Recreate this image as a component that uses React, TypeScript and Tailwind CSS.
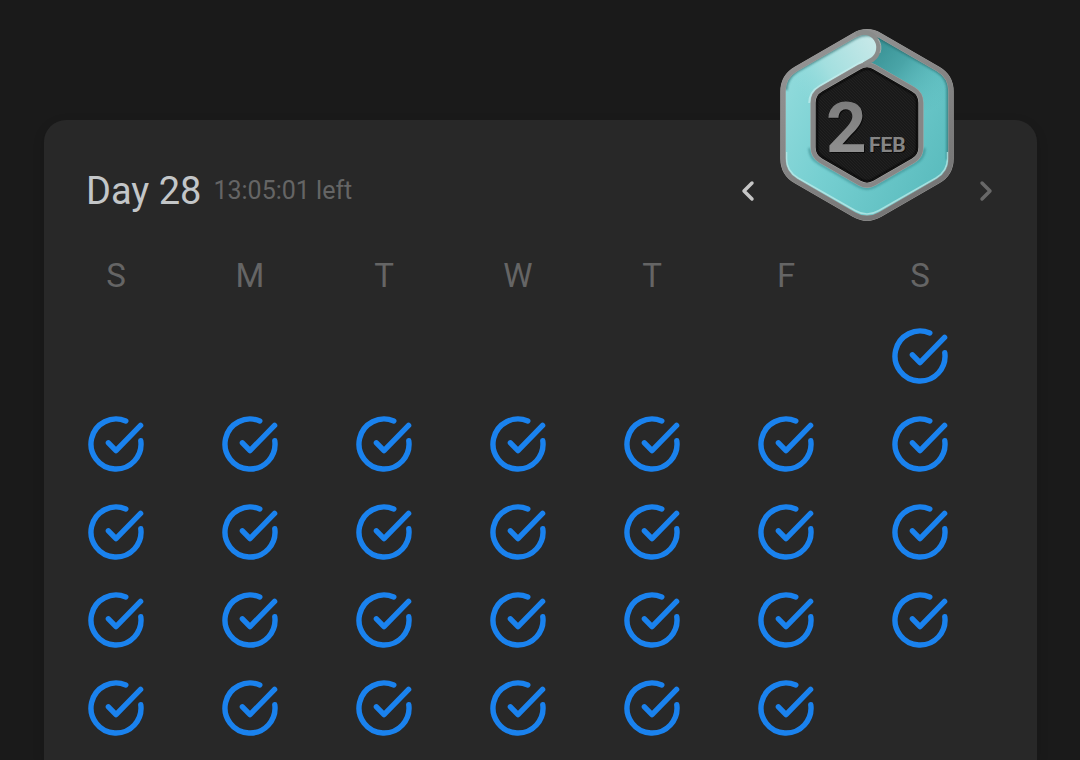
import { ChevronLeft, ChevronRight } from "lucide-react";

const WEEKDAYS = [
  { short: "S", name: "Sunday" },
  { short: "M", name: "Monday" },
  { short: "T", name: "Tuesday" },
  { short: "W", name: "Wednesday" },
  { short: "T", name: "Thursday" },
  { short: "F", name: "Friday" },
  { short: "S", name: "Saturday" },
];

const FIRST_WEEKDAY = 6;
const COMPLETED_DAYS = 28;

const weeks: boolean[][] = Array.from({ length: 5 }, (_, week) =>
  Array.from({ length: 7 }, (_, weekday) => {
    const day = week * 7 + weekday - FIRST_WEEKDAY + 1;
    return day >= 1 && day <= COMPLETED_DAYS;
  }),
);

function CheckIcon() {
  return (
    <svg
      viewBox="0 0 56 56"
      className="mx-auto block h-14 w-14"
      fill="none"
      stroke="#1a82ee"
      strokeWidth="5.4"
      strokeLinecap="round"
      strokeLinejoin="round"
      role="img"
      aria-label="Completed"
    >
      <path d="M37.8 5 A25 25 0 1 0 52.8 24.8" />
      <path d="M20.4 26.8 L28 34.6 L52.6 9.4" />
    </svg>
  );
}

const OUTER =
  "M84 15.5 Q97 8 110 15.5 L168 49 Q181 56.5 181 71.5 V138.5 Q181 153.5 168 161 L110 194.5 Q97 202 84 194.5 L26 161 Q13 153.5 13 138.5 V71.5 Q13 56.5 26 49 Z";
const INNER =
  "M89.3 46.9 Q97 42.5 104.7 46.9 L143.3 69.2 Q151 73.7 151 82.7 V127.3 Q151 136.3 143.3 140.8 L104.7 163.1 Q97 167.5 89.3 163.1 L50.7 140.8 Q43 136.3 43 127.3 V82.7 Q43 73.7 50.7 69.2 Z";

function MonthBadge() {
  return (
    <svg
      viewBox="0 0 200 210"
      className="pointer-events-none absolute left-1/2 top-1/2 h-[210px] w-[200px] -translate-x-[97px] -translate-y-[171px]"
      fill="none"
    >
      <defs>
        <linearGradient id="enamel" x1="14" y1="70" x2="175" y2="150" gradientUnits="userSpaceOnUse">
          <stop offset="0" stopColor="#8fdadb" />
          <stop offset="0.4" stopColor="#76cfd1" />
          <stop offset="1" stopColor="#5bbcbe" />
        </linearGradient>
        <linearGradient id="cap" x1="30" y1="72" x2="106" y2="26" gradientUnits="userSpaceOnUse">
          <stop offset="0" stopColor="#93dbdc" stopOpacity="0" />
          <stop offset="0.4" stopColor="#a3dfdf" />
          <stop offset="1" stopColor="#c6e8e8" />
        </linearGradient>
        <linearGradient id="fold" x1="106" y1="28" x2="172" y2="85" gradientUnits="userSpaceOnUse">
          <stop offset="0" stopColor="#3a9396" />
          <stop offset="0.35" stopColor="#4aa5a8" />
          <stop offset="1" stopColor="#5bbcbe" stopOpacity="0" />
        </linearGradient>
        <linearGradient id="rim" x1="40" y1="20" x2="140" y2="195" gradientUnits="userSpaceOnUse">
          <stop offset="0" stopColor="#949494" />
          <stop offset="1" stopColor="#747474" />
        </linearGradient>
        <linearGradient id="digit" x1="0" y1="80" x2="0" y2="132" gradientUnits="userSpaceOnUse">
          <stop offset="0" stopColor="#7c7c7c" />
          <stop offset="1" stopColor="#8f8f8f" />
        </linearGradient>
        <filter id="soft" x="-10%" y="-10%" width="120%" height="120%">
          <feGaussianBlur stdDeviation="1.2" />
        </filter>
        <pattern id="weave" width="3" height="3" patternUnits="userSpaceOnUse">
          <rect width="3" height="3" fill="#191919" />
          <path d="M0 0 L3 3" stroke="#232323" strokeWidth="0.8" />
        </pattern>
        <clipPath id="outerClip">
          <path d={OUTER} />
        </clipPath>
        <clipPath id="innerClip">
          <path d={INNER} />
        </clipPath>
      </defs>

      <g clipPath="url(#outerClip)">
        <path d={OUTER} fill="url(#enamel)" />
        <path d="M97 0 H190 V90 H151 V74 L97 43 Z" fill="url(#fold)" />
        <path
          d="M13 56.5 L87.5 13.5 A15 15 0 0 1 102.5 39.5 L43 73.7 L13 91 Z"
          fill="url(#cap)"
        />
        <path
          d="M16 70 Q16 58 27 51 L85 18 Q97 11 109 18 L167 51 Q178 58 178 70 V140"
          stroke="#245f61"
          strokeWidth="3"
          strokeOpacity="0.65"
          filter="url(#soft)"
        />
        <path
          d="M16.5 132 V139 Q16.5 151 28 158 L85 190.500 Q97 197.500 109 190.500 L166 158 Q177.500 151 177.500 139 V132"
          stroke="#bdebea"
          strokeWidth="1.6"
          strokeOpacity="0.75"
        />
        <path
          d="M94 40.500 L50 66 Q39.500 72 39.500 83"
          stroke="#c6eeee"
          strokeWidth="2.500"
          strokeOpacity="0.7"
        />
        <path
          d="M39.500 128 Q39.500 138 49 143.500 L88 166 Q97 171 106 166 L145 143.500 Q154.500 138 154.500 128"
          stroke="#338083"
          strokeWidth="2.500"
          strokeOpacity="0.6"
          filter="url(#soft)"
        />
      </g>
      <path d={INNER} fill="url(#weave)" />
      <g clipPath="url(#innerClip)">
        <path d={INNER} stroke="#080808" strokeWidth="9" filter="url(#soft)" />
      </g>
      <path d={OUTER} stroke="#a2a2a0" strokeWidth="5.4" />
      <path d={OUTER} stroke="url(#rim)" strokeWidth="4.8" />
      <path d={INNER} stroke="#a6a6a4" strokeWidth="5.2" />
      <path d={INNER} stroke="#868686" strokeWidth="4.4" />
      <path d="M86 14.5 A15 15 0 0 1 102.5 39.5 L94 44.5" stroke="#8a8c8b" strokeWidth="4.6" />
      <path d="M108 19 A15.500 15.500 0 0 1 110 33" stroke="#b3b6b5" strokeWidth="0.8" />

      <g fontFamily="Roboto, 'Liberation Sans', sans-serif" fontWeight="700">
        <g fill="#050505" opacity="0.7">
          <text x="57" y="133" fontSize="71">2</text>
          <text x="100" y="133" fontSize="21">FEB</text>
        </g>
        <text x="56" y="132" fontSize="71" fill="url(#digit)">2</text>
        <text x="99" y="132" fontSize="21" fill="#858585">FEB</text>
      </g>
    </svg>
  );
}

export default function App() {
  return (
    <main className="flex min-h-screen flex-col bg-[#1a1a1a] pl-11 pr-[43px] pt-[120px] font-['Roboto','Liberation_Sans',sans-serif]">
      <section className="flex-1 rounded-t-[22px] bg-[#282828] shadow-[0_4px_12px_rgba(0,0,0,0.15)]">
        <header className="flex items-center justify-between pl-[42px] pr-[35px] pt-11">
          <div className="flex items-center gap-3 whitespace-nowrap">
            <h1 className="text-[38px] leading-[54px] text-[#c3c6c8]">Day 28</h1>
            <p className="text-[25px] leading-[54px] text-[#656565]">13:05:01 left</p>
          </div>
          <nav aria-label="Month" className="relative flex w-[270px] items-center justify-between">
            <button type="button" aria-label="Previous month" className="text-[#c6c6c6]">
              <ChevronLeft size={32} strokeWidth={2.6} />
            </button>
            <MonthBadge />
            <button type="button" aria-label="Next month" className="text-[#686868]">
              <ChevronRight size={32} strokeWidth={2.6} />
            </button>
          </nav>
        </header>

        <div className="pl-[5px] pr-[50px] pt-8">
          <table className="w-full table-fixed border-collapse">
            <thead>
              <tr>
                {WEEKDAYS.map((day) => (
                  <th
                    key={day.name}
                    abbr={day.name}
                    scope="col"
                    className="p-0 pb-1.5 text-center text-[33px] font-normal leading-[52px] text-[#656565]"
                  >
                    {day.short}
                  </th>
                ))}
              </tr>
            </thead>
            <tbody>
              {weeks.map((week, index) => (
                <tr key={index} className="h-[88px]">
                  {week.map((done, weekday) => (
                    <td key={weekday} className="p-0 pt-2 align-middle">
                      {done && <CheckIcon />}
                    </td>
                  ))}
                </tr>
              ))}
            </tbody>
          </table>
        </div>
      </section>
    </main>
  );
}
